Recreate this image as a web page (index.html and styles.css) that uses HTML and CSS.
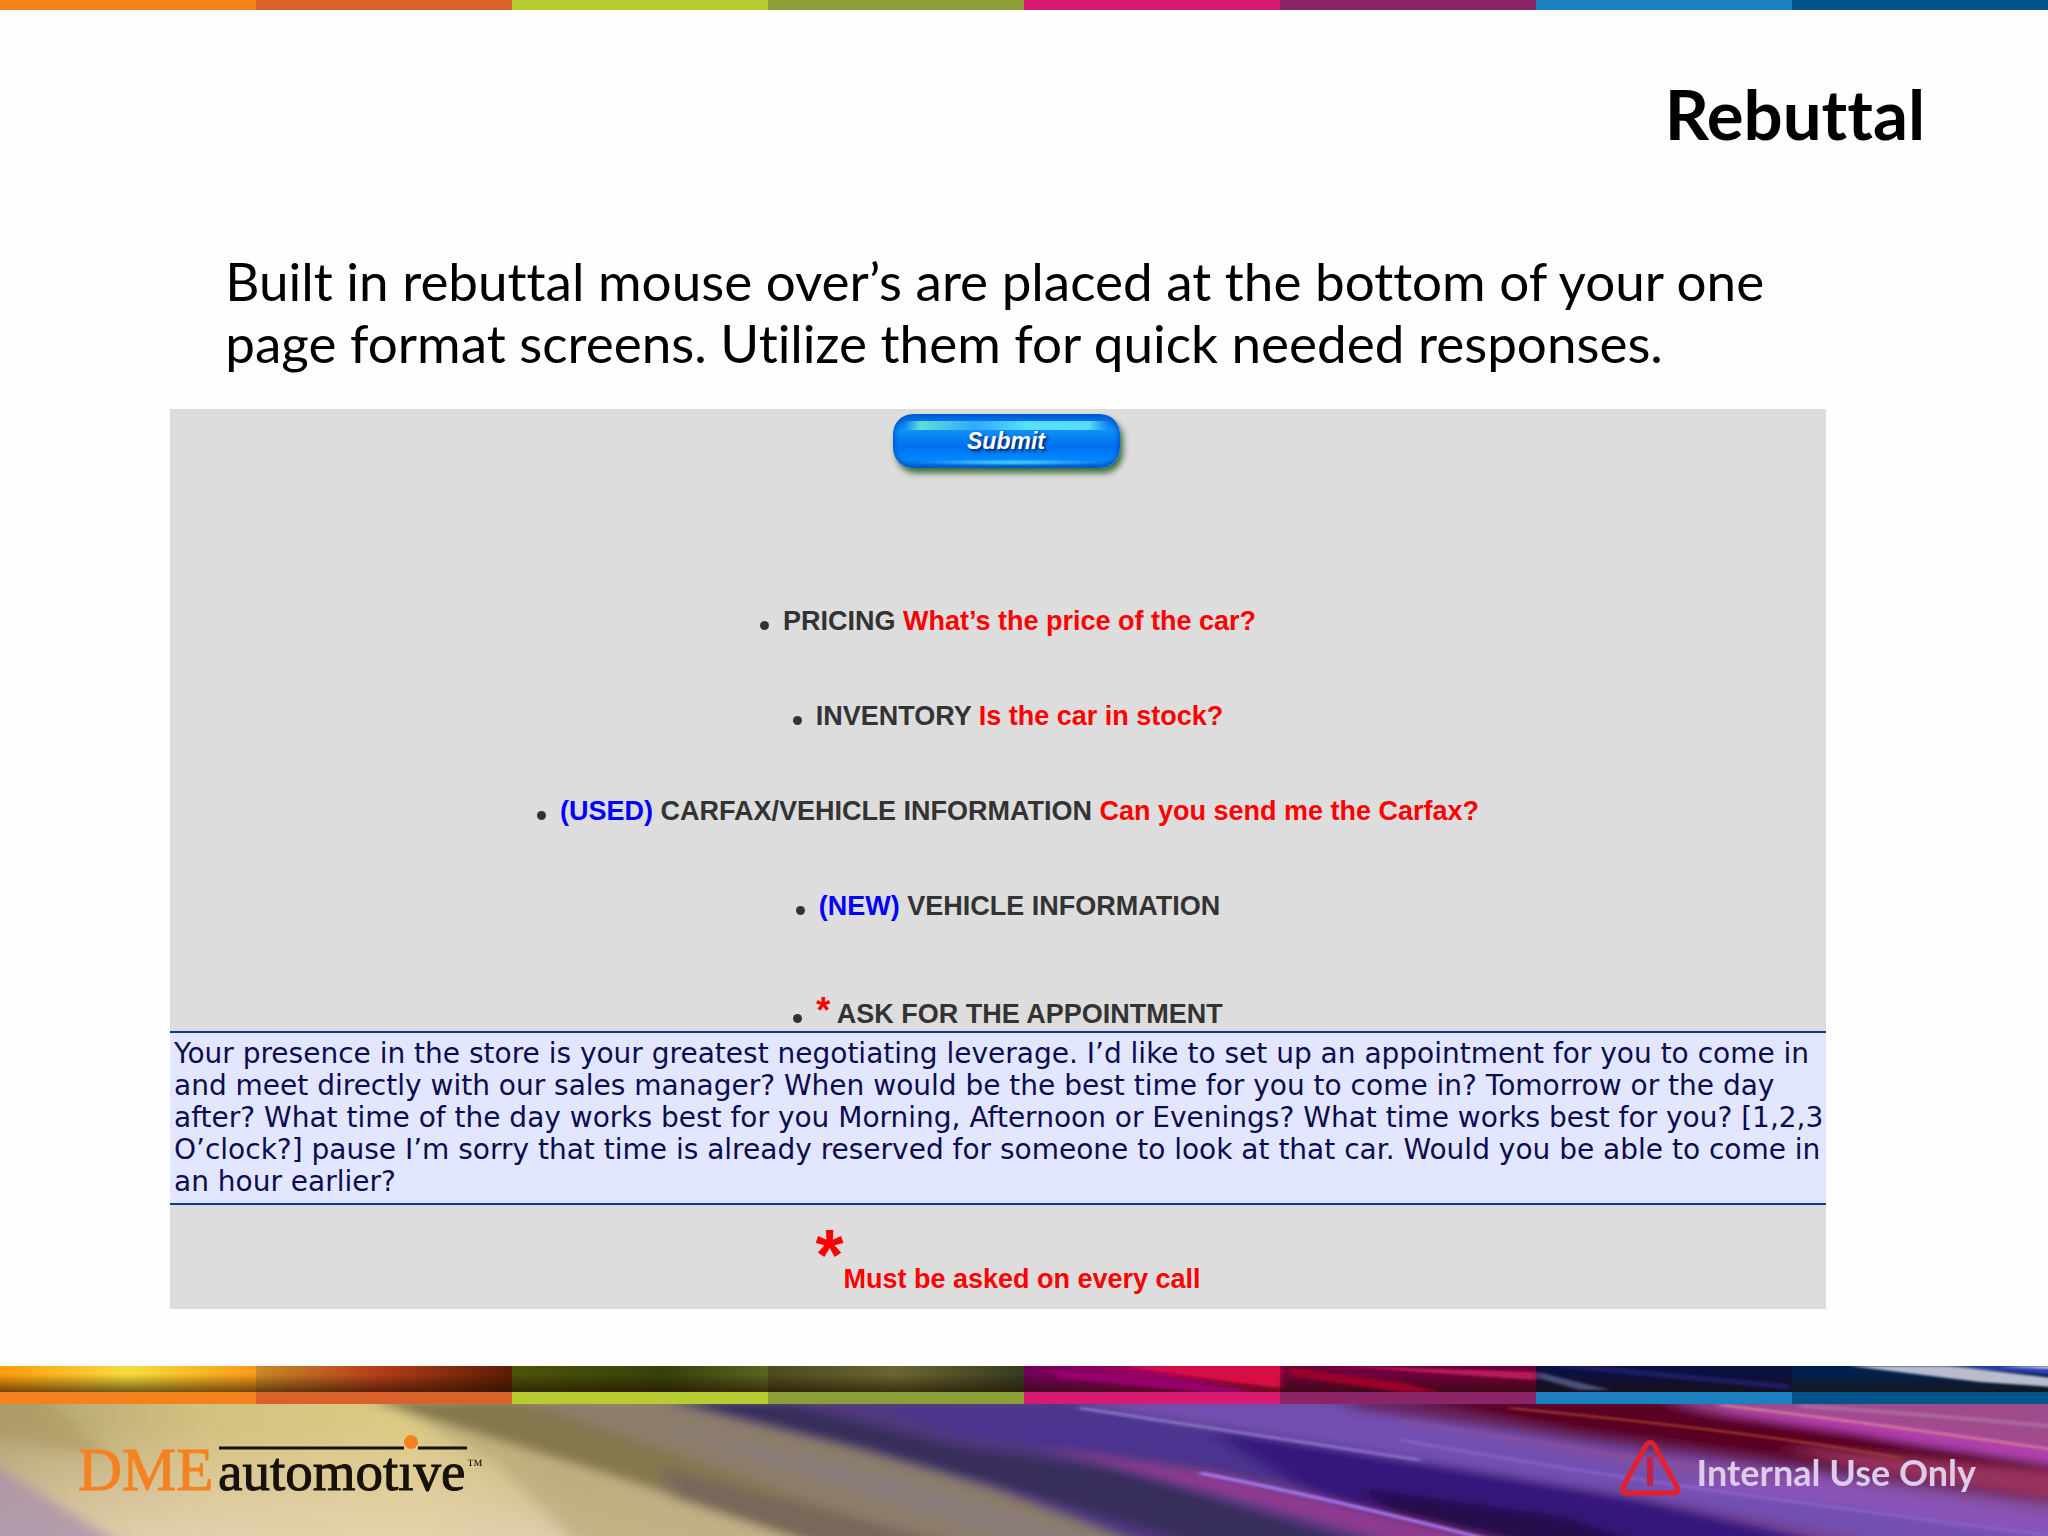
FILE: index.html
```html
<!DOCTYPE html>
<html lang="en">
<head>
    <meta charset="UTF-8">
    <meta name="viewport" content="width=device-width, initial-scale=1.0">
    <title>Rebuttal</title>
    <link rel="stylesheet" href="styles.css">
</head>
<body>
    <div class="stripe top-stripe">
        <span class="orange"></span><span class="rust"></span><span class="lime"></span><span class="olive"></span>
        <span class="pink"></span><span class="plum"></span><span class="sky"></span><span class="navy"></span>
    </div>

    <main class="slide">
        <h1>Rebuttal</h1>
        <p class="intro">Built in rebuttal mouse over’s are placed at the bottom of your one page format screens. Utilize them for quick needed responses.</p>

        <div class="panel">
            <div class="submit-row">
                <button type="submit" class="submit-button">Submit</button>
            </div>

            <ul class="rebuttals">
                <li>PRICING <span class="question">What’s the price of the car?</span></li>
                <li>INVENTORY <span class="question">Is the car in stock?</span></li>
                <li><span class="kind">(USED)</span> CARFAX/VEHICLE INFORMATION <span class="question">Can you send me the Carfax?</span></li>
                <li><span class="kind">(NEW)</span> VEHICLE INFORMATION</li>
                <li class="ask"><span class="star">*</span> ASK FOR THE APPOINTMENT</li>
            </ul>

            <p class="response">
                Your presence in the store is your greatest negotiating leverage. I’d like to set up an appointment for you to come in<br>
                and meet directly with our sales manager? When would be the best time for you to come in? Tomorrow or the day<br>
                after? What time of the day works best for you Morning, Afternoon or Evenings? What time works best for you? [1,2,3<br>
                O’clock?] pause I’m sorry that time is already reserved for someone to look at that car. Would you be able to come in<br>
                an hour earlier?
            </p>

            <p class="must-ask"><span class="big-star">*</span>Must be asked on every call</p>
        </div>
    </main>

    <footer class="footer">
        <svg class="streaks" viewBox="0 0 2048 170" preserveAspectRatio="none" aria-hidden="true">
            <defs>
                <filter id="soft" x="-10%" y="-50%" width="120%" height="200%"><feGaussianBlur stdDeviation="9 5"/></filter>
                <filter id="fine" x="-10%" y="-50%" width="120%" height="200%"><feGaussianBlur stdDeviation="3 1"/></filter>
                <linearGradient id="base">
                    <stop offset="0" stop-color="#b3a172"/>
                    <stop offset="0.1" stop-color="#d3c181"/>
                    <stop offset="0.2" stop-color="#dccb85"/>
                    <stop offset="0.32" stop-color="#b5a777"/>
                    <stop offset="0.42" stop-color="#857567"/>
                    <stop offset="0.52" stop-color="#5b4a80"/>
                    <stop offset="0.7" stop-color="#533590"/>
                    <stop offset="1" stop-color="#8e4c9c"/>
                </linearGradient>
                <linearGradient id="haze" x2="0" y2="1">
                    <stop offset="0.35" stop-color="#e8d3b8" stop-opacity="0"/>
                    <stop offset="1" stop-color="#e8d3b8" stop-opacity="0.75"/>
                </linearGradient>
                <linearGradient id="g1"><stop offset="0" stop-color="#ff9a10"/><stop offset="0.5" stop-color="#f6dc3a"/><stop offset="1" stop-color="#f99a18"/></linearGradient>
                <linearGradient id="g2"><stop offset="0" stop-color="#c98a28"/><stop offset="0.45" stop-color="#b8401a"/><stop offset="1" stop-color="#5c1c04"/></linearGradient>
                <linearGradient id="g3"><stop offset="0" stop-color="#4c5408"/><stop offset="0.6" stop-color="#38400a"/><stop offset="1" stop-color="#5c6420"/></linearGradient>
                <linearGradient id="g4"><stop offset="0" stop-color="#4c4a20"/><stop offset="0.5" stop-color="#6a6630"/><stop offset="1" stop-color="#363a20"/></linearGradient>
                <linearGradient id="g5"><stop offset="0" stop-color="#700058"/><stop offset="0.5" stop-color="#a00064"/><stop offset="1" stop-color="#d80840"/></linearGradient>
                <linearGradient id="shade" x2="0" y2="1"><stop offset="0.3" stop-color="#201000" stop-opacity="0"/><stop offset="1" stop-color="#201000" stop-opacity="0.65"/></linearGradient>
            </defs>

            <rect width="2048" height="170" fill="url(#base)"/>
            <rect width="900" height="170" fill="url(#haze)"/>

            <!-- sand and taupe side -->
            <g filter="url(#soft)">
                <path d="M-20 90L140 190H-20Z" fill="#a68fae" opacity=".75"/>
                <path d="M-20 30H40L110 90L-20 70Z" fill="#a8935c" opacity=".5"/>
                <path d="M400 44L640 110L860 190H590L500 100Z" fill="#b8a878" opacity=".7"/>
                <path d="M370 34H560L780 95L1080 190H860L620 112Z" fill="#85784f"/>
                <path d="M520 34H740L1180 190H960L700 96Z" fill="#8b7d6a"/>
                <path d="M660 100L1000 190H850L670 130Z" fill="#78685a"/>
                <path d="M660 60L900 112L1150 190H1060L860 126Z" fill="#8a7b78"/>
                <path d="M660 34H1080L1440 190H1170L1000 125L860 84Z" fill="#50397d"/>
                <path d="M680 36H780L960 80L1120 104L1400 190H1240L1000 120L860 82Z" fill="#382e5c"/>
                <path d="M880 40H1090L1460 110V150L1180 96L960 70Z" fill="#4c3590"/>
            </g>

            <!-- violet and red side -->
            <g filter="url(#soft)">
                <path d="M1060 34H1330L1640 88L2080 160V190H1960L1640 130L1400 92Z" fill="#7250b0"/>
                <path d="M1210 64L1420 96L1640 134L1880 190H1460L1300 120Z" fill="#34147a"/>
                <path d="M1360 122L1560 150L1680 190H1440Z" fill="#250c4c"/>
                <path d="M1340 42L1560 72L1820 106L2080 142V120L1700 60L1380 34Z" fill="#682860"/>
                <path d="M1400 34H1700L1900 76L2080 104V136L1820 98L1580 66Z" fill="#5a0424"/>
                <path d="M1780 80L2080 108V138L1860 102Z" fill="#98305c"/>
                <path d="M1660 34H2080V88L1860 62Z" fill="#a04c8c"/>
                <path d="M1670 40L1820 50L2080 88V100L1850 66Z" fill="#b83cb0"/>
                <path d="M1450 64L1640 88L2080 142V152L1700 110Z" fill="#85509e"/>
                <path d="M1640 118L1840 140L2080 180V154L1800 112Z" fill="#8a52b8"/>
                <path d="M1040 80L1220 108L1560 190H1440L1180 118Z" fill="#8f3a90"/>
            </g>
            <g filter="url(#fine)" fill="none">
                <path d="M1200 107Q1320 130 1490 174" stroke="#a880f8" stroke-width="3"/>
                <path d="M1080 42Q1240 66 1420 94" stroke="#8b70c8" stroke-width="3"/>
                <path d="M1400 74Q1640 118 2070 172" stroke="#8868d0" stroke-width="3" opacity=".7"/>
                <path d="M1510 42Q1760 66 1900 92" stroke="#a84030" stroke-width="2"/>
                <path d="M1720 39Q1880 58 2070 86" stroke="#d88898" stroke-width="2"/>
                <path d="M1800 40Q1900 46 2070 62" stroke="#b878a8" stroke-width="4" opacity=".6"/>
                <path d="M1400 55Q1640 92 1800 120" stroke="#8850a0" stroke-width="4" opacity=".7"/>
            </g>

            <!-- dark band above the colour stripe -->
            <rect width="256" height="27" fill="url(#g1)"/>
            <rect x="256" width="256" height="27" fill="url(#g2)"/>
            <rect x="512" width="256" height="27" fill="url(#g3)"/>
            <rect x="768" width="256" height="27" fill="url(#g4)"/>
            <rect x="1024" width="256" height="27" fill="url(#g5)"/>
            <rect x="1280" width="256" height="27" fill="#70003c"/>
            <rect x="1536" width="256" height="27" fill="#0c1040"/>
            <rect x="1792" width="256" height="27" fill="#02204c"/>
            <rect width="2048" height="27" fill="url(#shade)"/>
            <g filter="url(#fine)">
                <path d="M1050 4L1180 14L1260 26H1200L1060 12Z" fill="#94006c"/>
                <path d="M1120 0H1280V22Z" fill="#d80c44"/>
                <path d="M1290 2L1400 16L1440 26H1400L1290 10Z" fill="#98002c"/>
                <path d="M1340 0L1535 6V14L1450 8Z" fill="#b81c58"/>
                <path d="M1538 6L1610 24H1580L1538 12Z" fill="#485078"/>
                <path d="M1540 0H1600L1790 18V24Z" fill="#1c1c60"/>
                <path d="M1850 0H1950L2070 14V22L1980 16Z" fill="#b8bccc"/>
                <path d="M1950 0H2070V10Z" fill="#3040c0"/>
                <path d="M2000 0H2070V3Z" fill="#dfe4f8"/>
            </g>
        </svg>

        <div class="stripe footer-stripe">
            <span class="orange"></span><span class="rust"></span><span class="lime"></span><span class="olive"></span>
            <span class="pink"></span><span class="plum"></span><span class="sky"></span><span class="navy"></span>
        </div>

        <div class="footer-content">
            <svg class="logo" width="420" height="80" viewBox="0 0 420 80" role="img" aria-label="DME automotive">
                <text x="0" y="62" class="logo-dme">DME</text>
                <text x="140" y="62" class="logo-auto">automotıve</text>
                <path d="M141 20H326M340 20H389" stroke="#18100a" stroke-width="3"/>
                <ellipse cx="333" cy="14" rx="7" ry="7" fill="#f58220"/>
                <text x="389" y="42" class="logo-tm">™</text>
            </svg>
            <div class="notice">
                <svg width="62" height="56" viewBox="0 0 62 56" aria-hidden="true">
                    <path d="M27 5Q31 0 35 5L58 47Q60 53 54 53H8Q2 53 4 47Z" fill="none" stroke="#e5202c" stroke-width="5" stroke-linejoin="round"/>
                    <path d="M31 17V46" stroke="#c82040" stroke-width="6"/>
                </svg>
                <span class="notice-text">Internal Use Only</span>
            </div>
        </div>
    </footer>
</body>
</html>
```
FILE: styles.css
```css
* {
    box-sizing: border-box;
}

body {
    display: flex;
    flex-direction: column;
    min-height: 100vh;
    margin: 0;
    background-color: #fefefe;
    color: #000;
    font-family: Lato, sans-serif;
    font-variant-ligatures: none;
}

.stripe {
    display: grid;
    grid-template-columns: repeat(8, 1fr);
}

.top-stripe {
    height: 10px;
}

.orange { background-color: #f5821c; }
.rust { background-color: #d9622a; }
.lime { background-color: #b6cc30; }
.olive { background-color: #8c9e38; }
.pink { background-color: #d91a72; }
.plum { background-color: #8c2468; }
.sky { background-color: #1a80c0; }
.navy { background-color: #00568c; }

.slide {
    padding: 64px 0 56px;
}

h1 {
    margin: 0 6% 0 0;
    font-size: 69px;
    line-height: 80px;
    text-align: right;
}

.intro {
    margin: 96px 10% 0 11%;
    font-size: 53px;
    line-height: 62px;
}

.panel {
    margin: 35px 222px 0 170px;
    background-color: #dedddd;
    color: #333;
    font-family: "Liberation Sans", Arial, sans-serif;
    font-size: 27px;
    font-weight: bold;
    line-height: 32px;
}

.submit-row {
    padding: 5px 0 0 16px;
    text-align: center;
}

.submit-button {
    display: block;
    width: 227px;
    height: 54px;
    margin: 0 auto;
    padding: 0;
    border: none;
    border-radius: 20px;
    background:
        linear-gradient(90deg, rgba(96, 224, 208, 0), #60dcd8 8%, #30a8ff 35%, #58e0ff 60%, #58dcff 90%, rgba(88, 220, 255, 0)) 50% 7px / 205px 9px no-repeat,
        radial-gradient(closest-side, #48ccff 20%, rgba(72, 204, 255, 0)) 70% 45px / 200px 7px no-repeat,
        linear-gradient(#0060d8, #1090f8 30%, #0070f0 60%, #0088ff 85%, #0060c0);
    box-shadow: inset 0 0 5px 2px #0058d0, 3px 5px 6px rgba(20, 80, 20, 0.8);
    color: #fff;
    font-family: inherit;
    font-size: 23px;
    font-style: italic;
    font-weight: bold;
    text-shadow: 2px 2px 3px #002060;
    cursor: pointer;
}

.rebuttals {
    margin: 0;
    padding: 137px 0 0 20px;
    list-style: none;
    text-align: center;
}

.rebuttals li {
    margin-bottom: 63px;
}

.rebuttals li::before {
    content: "";
    display: inline-block;
    width: 9px;
    height: 9px;
    margin-right: 14px;
    border-radius: 50%;
    background-color: #333;
}

.rebuttals .ask {
    margin: 76px 0 0;
    padding-bottom: 1px;
}

.question {
    color: #f00;
}

.kind {
    color: #00f;
}

.star {
    color: #f00;
    font-size: 36px;
    line-height: 24px;
}

.response {
    margin: 0;
    padding: 5px 0 5px 4px;
    border-top: 2px solid #0a3a8c;
    border-bottom: 2px solid #0a3a8c;
    background-color: #e2e6ff;
    color: #0c0c50;
    font-family: Verdana, "DejaVu Sans", sans-serif;
    font-size: 28px;
    font-weight: normal;
    line-height: 32px;
    white-space: nowrap;
}

.must-ask {
    margin: 0;
    padding: 14px 0 14px 20px;
    color: #f00;
    text-align: center;
}

.big-star {
    font-size: 72px;
    line-height: 72px;
    vertical-align: 8px;
}

.footer {
    position: relative;
    margin-top: auto;
    padding-top: 26px;
}

.streaks {
    position: absolute;
    top: 0;
    left: 0;
    width: 100%;
    height: 100%;
}

.footer-stripe {
    position: relative;
    height: 12px;
}

.footer-content {
    position: relative;
    display: flex;
    align-items: center;
    justify-content: space-between;
    height: 132px;
    padding: 0 72px 4px 78px;
}

.logo {
    font-family: "Liberation Serif", serif;
}

.logo-dme {
    fill: #f58220;
    stroke: #f58220;
    font-size: 61px;
}

.logo-auto {
    fill: #18100a;
    stroke: #18100a;
    font-size: 55px;
}

.logo-tm {
    fill: #18100a;
    font-size: 16px;
}

.notice {
    display: flex;
    align-items: center;
    gap: 16px;
    color: #dccbea;
    font-size: 36px;
    font-weight: bold;
}

.notice-text {
    padding-top: 8px;
}
```
